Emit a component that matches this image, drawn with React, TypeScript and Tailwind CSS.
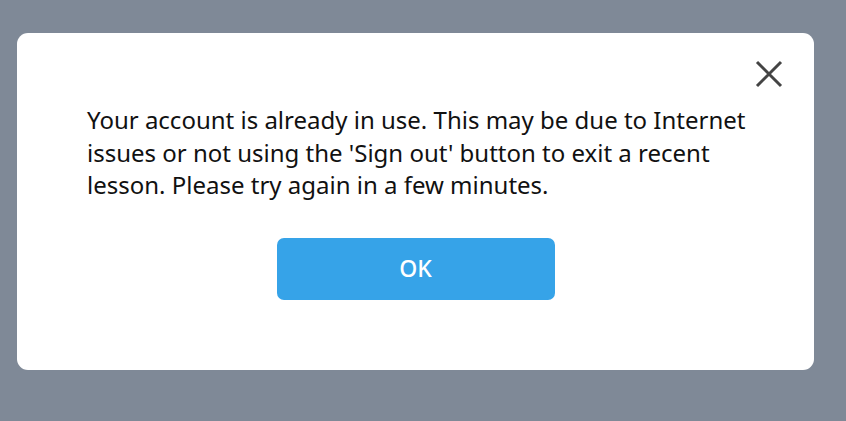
export default function App() {
  return (
    <div className="flex h-[421px] w-[846px] items-start bg-[#7f8997] pl-[17px] pt-[33px] [font-family:'Noto_Sans',sans-serif]">
      <div className="relative flex h-[337px] w-[797px] flex-col rounded-[11px] bg-white">
        <button className="absolute right-[30px] top-[26px] text-[#444]" aria-label="Close">
          <svg width="30" height="30" viewBox="0 0 30 30" fill="none" stroke="currentColor" strokeWidth="3">
            <path d="M3 3L27 27M27 3L3 27" />
          </svg>
        </button>
        <p className="ml-[70px] mt-[71px] w-[680px] text-[24px] leading-[32.5px] text-[#111]">
          Your account is already in use. This may be due to Internet issues or not using the 'Sign out' button to exit a recent lesson. Please try again in a few minutes.
        </p>
        <div className="mt-[36px] flex justify-center">
          <button className="h-[62px] w-[278px] rounded-[7px] bg-[#36a3e8] text-[23px] font-medium text-white">
            OK
          </button>
        </div>
      </div>
    </div>
  );
}
